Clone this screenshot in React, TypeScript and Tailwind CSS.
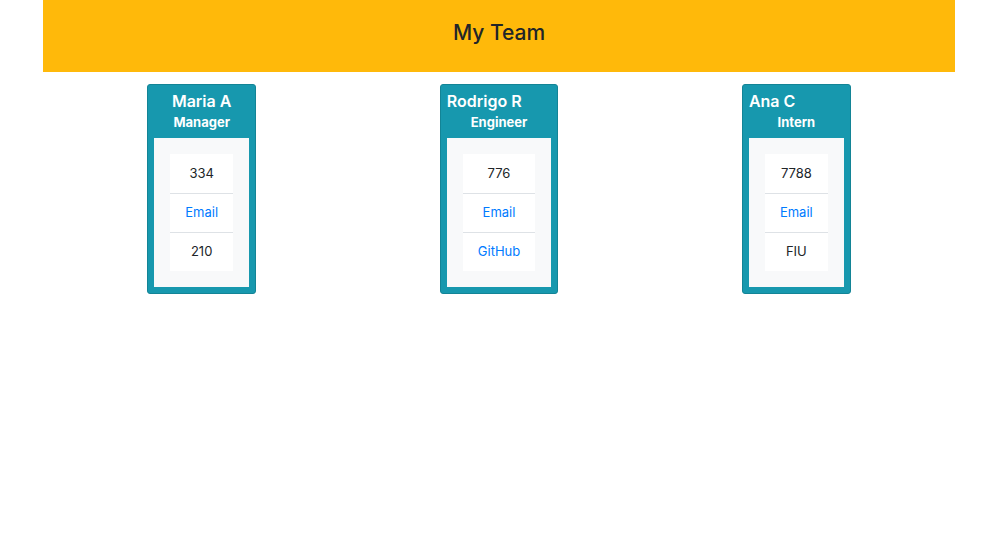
import React from "react";

type Row = { text: string; link?: boolean };
type Person = { name: string; role: string; rows: Row[]; centerName?: boolean };

const people: Person[] = [
  { name: "Maria A", role: "Manager", centerName: true, rows: [{ text: "334" }, { text: "Email", link: true }, { text: "210" }] },
  { name: "Rodrigo R", role: "Engineer", rows: [{ text: "776" }, { text: "Email", link: true }, { text: "GitHub", link: true }] },
  { name: "Ana C", role: "Intern", rows: [{ text: "7788" }, { text: "Email", link: true }, { text: "FIU" }] },
];

function Card({ p }: { p: Person }) {
  return (
    <div className="rounded-[3px] border border-[#138496] bg-[#1798ae] px-[6px] pb-[6px] text-white">
      <div className="pt-[5px] pb-[6px]">
        <div className={`text-[16px] font-semibold leading-[22px] ${p.centerName ? "text-center" : "text-left"}`}>{p.name}</div>
        <div className="text-center text-[13px] font-bold leading-[20px]">{p.role}</div>
      </div>
      <div className="bg-[#f8f9fa] p-[16px]">
        <ul className="bg-white">
          {p.rows.map((r, i) => (
            <li
              key={i}
              className={`px-[15px] py-[10px] text-center text-[13px] leading-[19px] ${i > 0 ? "border-t border-[#dee2e6] pt-[9px]" : ""} ${r.link ? "text-[#007bff]" : "text-[#212529]"}`}
            >
              {r.text}
            </li>
          ))}
        </ul>
      </div>
    </div>
  );
}

export default function App() {
  return (
    <div className="min-h-[544px] bg-white" style={{ fontFamily: "Inter, 'Liberation Sans', sans-serif" }}>
      <div className="mx-auto w-[912px]">
        <header className="flex h-[72px] items-center justify-center bg-[#ffb90a] pb-[6px]">
          <h1 className="text-[21px] font-medium text-[#212529]">My Team</h1>
        </header>
        <div className="mt-[12px] grid grid-cols-3 px-[10px]">
          {people.map((p) => (
            <div key={p.name} className="flex justify-center">
              <Card p={p} />
            </div>
          ))}
        </div>
      </div>
    </div>
  );
}
